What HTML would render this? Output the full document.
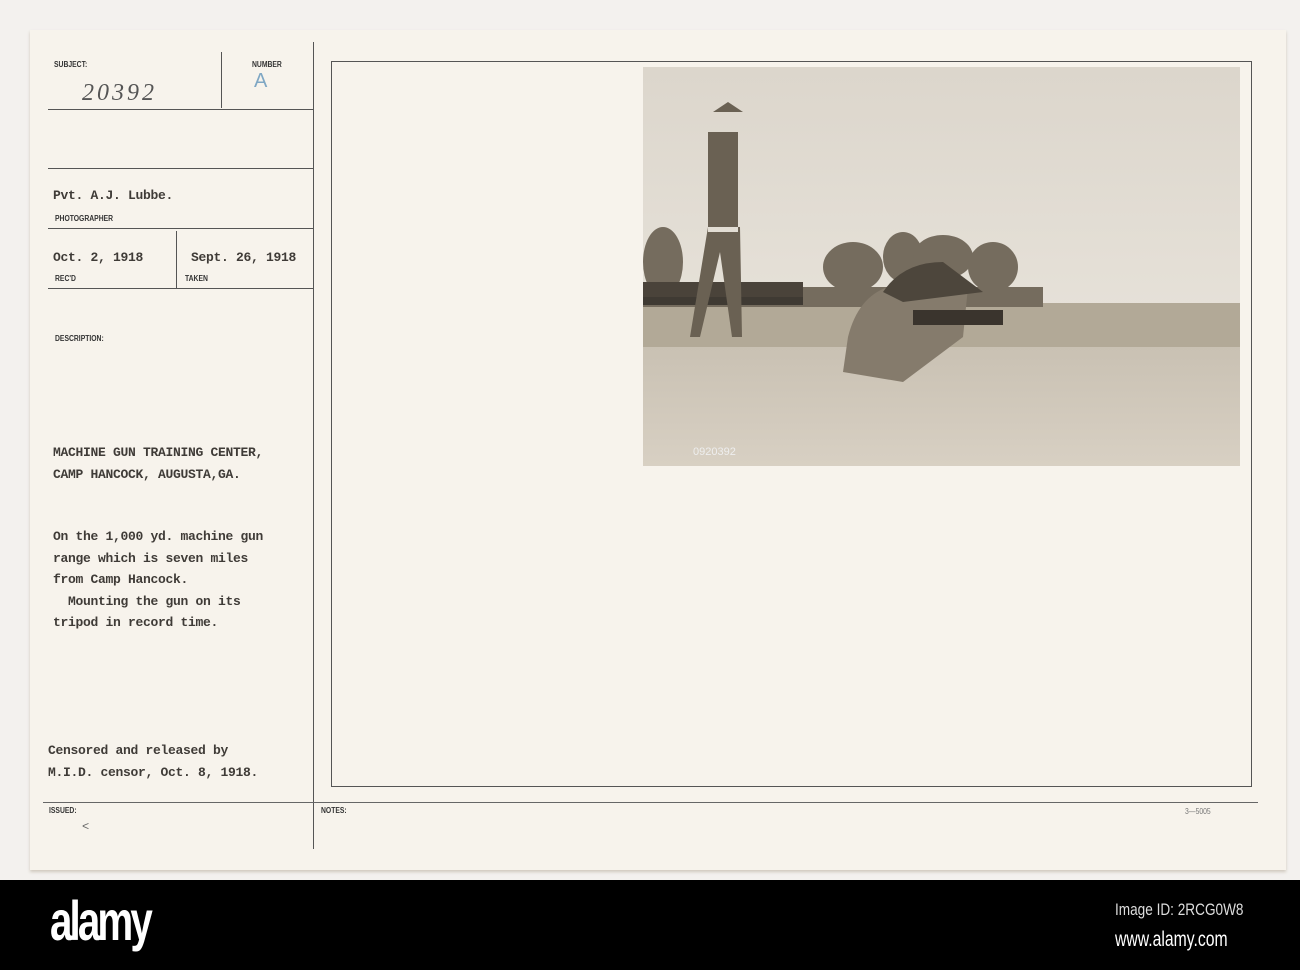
<!DOCTYPE html>
<html><head><meta charset="utf-8"><style>
*{margin:0;padding:0;box-sizing:border-box}
body{width:1300px;height:970px;background:#f3f1ee;position:relative;overflow:hidden;font-family:"Liberation Mono",monospace}
.card{position:absolute;left:30px;top:30px;width:1256px;height:840px;background:#f7f3ec;box-shadow:0 2px 3px #cfc8bd}
.a{position:absolute;white-space:nowrap}
.t{font-family:"Liberation Mono",monospace;font-size:13px;color:#3f3b37;line-height:21.5px;font-weight:bold;letter-spacing:-0.3px}
.l{font-family:"Liberation Sans",sans-serif;font-size:8px;font-weight:bold;color:#333;transform:scaleX(.85);transform-origin:left}
.h{position:absolute;height:1px;background:#555}
.v{position:absolute;width:1px;background:#555}
.bar{position:absolute;left:0;top:880px;width:1300px;height:90px;background:#000}
</style></head><body>
<div class="card"></div>
<div class="a l" style="left:54px;top:60px">SUBJECT:</div>
<div class="a l" style="left:252px;top:60px">NUMBER</div>
<div class="a" style="left:254px;top:70px;color:#7fa7c4;font-family:'Liberation Sans',sans-serif;font-size:20px">A</div>
<div class="a" style="left:82px;top:80px;font-family:'Liberation Serif',serif;font-style:italic;font-size:24px;color:#555;letter-spacing:3px">20392</div>
<div class="v" style="left:221px;top:52px;height:56px"></div>
<div class="h" style="left:48px;top:109px;width:265px"></div>
<div class="h" style="left:48px;top:168px;width:265px"></div>
<div class="a t" style="left:53px;top:185px">Pvt. A.J. Lubbe.</div>
<div class="a l" style="left:55px;top:214px">PHOTOGRAPHER</div>
<div class="h" style="left:48px;top:228px;width:265px"></div>
<div class="a t" style="left:53px;top:247px">Oct. 2, 1918</div>
<div class="a t" style="left:191px;top:247px">Sept. 26, 1918</div>
<div class="a l" style="left:55px;top:274px">REC'D</div>
<div class="a l" style="left:185px;top:274px">TAKEN</div>
<div class="v" style="left:176px;top:231px;height:57px"></div>
<div class="h" style="left:48px;top:288px;width:265px"></div>
<div class="a l" style="left:55px;top:334px">DESCRIPTION:</div>
<div class="a t" style="left:53px;top:442px">MACHINE GUN TRAINING CENTER,<br>CAMP HANCOCK, AUGUSTA,GA.</div>
<div class="a t" style="left:53px;top:526px">On the 1,000 yd. machine gun<br>range which is seven miles<br>from Camp Hancock.<br>&nbsp;&nbsp;Mounting the gun on its<br>tripod in record time.</div>
<div class="a t" style="left:48px;top:740px">Censored and released by<br>M.I.D. censor, Oct. 8, 1918.</div>
<div class="v" style="left:313px;top:42px;height:807px"></div>
<div style="position:absolute;left:331px;top:61px;width:921px;height:726px;border:1px solid #555"></div>
<div class="h" style="left:43px;top:802px;width:1215px;background:#666"></div>
<div class="a l" style="left:49px;top:806px">ISSUED:</div>
<div class="a l" style="left:321px;top:806px">NOTES:</div>
<div class="a" style="left:82px;top:820px;font-size:12px;color:#666">&lt;</div>
<div class="a l" style="left:1185px;top:807px;font-weight:normal;color:#777">3—5005</div>
<svg style="position:absolute;left:643px;top:67px" width="597" height="399" viewBox="0 0 597 399">
<defs><linearGradient id="s" x1="0" y1="0" x2="0" y2="1"><stop offset="0" stop-color="#dcd6cc"/><stop offset="1" stop-color="#ece8e0"/></linearGradient>
<linearGradient id="g" x1="0" y1="0" x2="0" y2="1"><stop offset="0" stop-color="#c9c1b3"/><stop offset="1" stop-color="#d8d0c3"/></linearGradient></defs>
<rect width="597" height="399" fill="url(#s)"/>
<rect y="236" width="597" height="60" fill="#b2a997"/>
<rect y="280" width="597" height="119" fill="url(#g)"/>
<g fill="#756c5e"><ellipse cx="20" cy="195" rx="20" ry="35"/><ellipse cx="210" cy="200" rx="30" ry="25"/><ellipse cx="260" cy="190" rx="20" ry="25"/><ellipse cx="300" cy="190" rx="30" ry="22"/><ellipse cx="350" cy="200" rx="25" ry="25"/><rect x="0" y="220" width="400" height="20"/></g>
<rect y="215" width="160" height="22" fill="#4a433a"/>
<rect y="230" width="160" height="8" fill="#3f3a33"/>
<path d="M70 45 l30 0 l-15 -10z M65 65 h30 v100 h-30z M65 160 l-18 110 h10 l20 -85 l12 85 h10 l-2-110z" fill="#6a6153"/>
<path d="M205 270 q10-40 40-50 l40-10 l40 10 l-5 50 l-60 45 l-60-10z" fill="#857b6c"/>
<path d="M240 225 q20-30 60-30 l40 30 l-80 10z" fill="#4d463c"/>
<rect x="270" y="243" width="90" height="15" fill="#3a342d"/>
<text x="50" y="388" font-family="Liberation Sans" font-size="11" fill="#eee">0920392</text>
</svg>
<div class="bar"></div>
<div class="a" style="left:50px;top:888px;color:#fff;font-family:'Liberation Sans',sans-serif;font-weight:bold;font-size:56px;letter-spacing:-4px;transform:scaleX(.72);transform-origin:left">alamy</div>
<div class="a" style="left:1115px;top:900px;color:#ddd;font-family:'Liberation Sans',sans-serif;font-size:17px;transform:scaleX(.8);transform-origin:left">Image ID: 2RCG0W8</div>
<div class="a" style="left:1115px;top:928px;color:#fff;font-family:'Liberation Sans',sans-serif;font-size:21px;transform:scaleX(.75);transform-origin:left">www.alamy.com</div>
</body></html>
